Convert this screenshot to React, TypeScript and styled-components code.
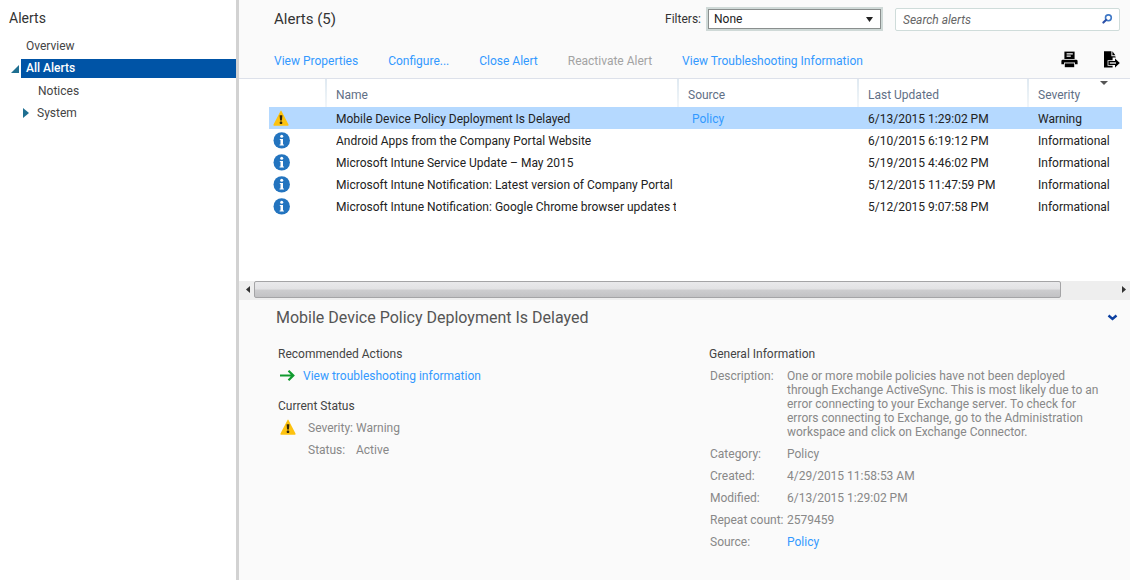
import React from "react";
import styled, { createGlobalStyle } from "styled-components";

const GlobalStyle = createGlobalStyle`
  *, *::before, *::after { box-sizing: border-box; }
  body {
    margin: 0;
    background: #ffffff;
    color: #222222;
    font-family: Roboto, "Open Sans", sans-serif;
    font-size: 12px;
    line-height: 22px;
  }
  button, input, select { font: inherit; color: inherit; }
  h1, h2, h3, p, ul, dl, dd { margin: 0; padding: 0; font-weight: 400; }
`;

const Page = styled.div`
  display: flex;
  min-height: 100vh;
`;

const Sidebar = styled.nav`
  flex: 0 0 239px;
  border-right: 3px solid #d2d2d2;
  padding-top: 6px;
`;

const SidebarTitle = styled.h2`
  font-size: 14px;
  line-height: 24px;
  padding-left: 9px;
  margin-bottom: 5px;
  color: #333333;
`;

const Tree = styled.ul`
  list-style: none;
`;

const TreeRow = styled.li<{ $indent: number }>`
  display: flex;
  align-items: center;
  min-height: 22px;
  padding-left: ${(p) => p.$indent}px;
`;

const Toggle = styled.button`
  display: flex;
  justify-content: center;
  align-items: center;
  flex: 0 0 12px;
  height: 18px;
  padding: 0 1px 0 0;
  border: 0;
  background: none;
`;

const TreeLink = styled.a<{ $selected?: boolean }>`
  flex: 1;
  padding-left: 5px;
  line-height: ${(p) => (p.$selected ? 19 : 22)}px;
  margin: ${(p) => (p.$selected ? "2px 0" : "0")};
  background: ${(p) => (p.$selected ? "#0054a6" : "transparent")};
  color: ${(p) => (p.$selected ? "#ffffff" : "#444444")};
  font-weight: ${(p) => (p.$selected ? 500 : 400)};
  text-decoration: none;
`;

const Main = styled.main`
  flex: 1;
  min-width: 0;
  display: flex;
  flex-direction: column;
`;

const Header = styled.header`
  background: #fafafa;
  border-bottom: 1px solid #dde1ea;
  padding: 7px 10px 6px 35px;
`;

const TitleBar = styled.div`
  display: flex;
  align-items: center;
  height: 24px;
`;

const PageTitle = styled.h1`
  flex: 1;
  font-size: 15px;
  color: #333333;
`;

const FilterLabel = styled.label`
  margin-right: 5px;
  color: #333333;
`;

const SelectFrame = styled.div`
  position: relative;
  width: 177px;
  margin-right: 12px;
  border: 1px solid #cfd9d7;
  background: #cfd9d7;
  padding: 1px;
`;

const FilterSelect = styled.select`
  display: block;
  appearance: none;
  width: 100%;
  height: 20px;
  padding: 0 5px;
  border: 1px solid #8a8f8e;
  border-radius: 0;
  background: #ffffff;
  color: #222222;
  line-height: 18px;
`;

const SelectArrow = styled.svg`
  position: absolute;
  right: 9px;
  top: 9px;
  pointer-events: none;
`;

const SearchBox = styled.form`
  display: flex;
  align-items: center;
  width: 225px;
  height: 23px;
  padding-right: 6px;
  border: 1px solid #cfdcda;
  border-radius: 2px;
  background: #ffffff;
`;

const SearchInput = styled.input`
  flex: 1;
  min-width: 0;
  border: 0;
  padding: 1px 7px 0;
  height: 21px;
  background: none;
  outline: 0;
  &::placeholder { color: #666666; font-style: italic; opacity: 1; }
`;

const IconButton = styled.button`
  display: flex;
  padding: 0;
  border: 0;
  background: none;
`;

const Toolbar = styled.div`
  display: flex;
  align-items: center;
  gap: 30px;
  margin-top: 19px;
`;

const Command = styled.button`
  border: 0;
  padding: 0;
  background: none;
  white-space: nowrap;
  color: #3399ff;
  &:disabled { color: #a3a3a3; }
`;

const ToolbarIcons = styled.div`
  display: flex;
  gap: 25px;
  margin-left: auto;
  padding-bottom: 4px;
`;

const ListArea = styled.section`
  min-height: 202px;
  padding: 0 8px 0 30px;
  background: #ffffff;
`;

const AlertTable = styled.table`
  width: 100%;
  table-layout: fixed;
  border-collapse: collapse;
`;

const HeadCell = styled.th<{ $width?: number; $divided?: boolean }>`
  width: ${(p) => (p.$width ? `${p.$width}px` : "auto")};
  height: 28px;
  padding: 4px 0 0 11px;
  text-align: left;
  font-weight: 400;
  color: #5f6f86;
  background: ${(p) =>
    p.$divided ? "linear-gradient(#dfe9f1, #f2f6f9) left / 2px 100% no-repeat" : "none"};
`;

const SortMark = styled.svg`
  position: absolute;
  right: 14px;
  top: -3px;
`;

const SortLabel = styled.span`
  display: block;
  position: relative;
`;

const Row = styled.tr<{ $selected?: boolean }>`
  height: 22px;
  background: ${(p) => (p.$selected ? "#b5d9ff" : "transparent")};
`;

const Cell = styled.td<{ $inset?: number }>`
  padding: 2px 0 0 ${(p) => p.$inset ?? 11}px;
  line-height: 20px;
  white-space: nowrap;
  overflow: hidden;
`;

const Clip = styled.div`
  overflow: hidden;
  margin-right: 1px;
`;

const Link = styled.a`
  color: #3399ff;
  text-decoration: none;
`;

const ScrollTrack = styled.div`
  display: flex;
  align-items: flex-start;
  height: 19px;
  background: #eeeeee;
`;

const ScrollButton = styled.button<{ $width: number }>`
  flex: 0 0 ${(p) => p.$width}px;
  display: flex;
  align-items: center;
  justify-content: flex-end;
  height: 17px;
  padding: 0 4px 0 0;
  border: 0;
  background: none;
`;

const ScrollRail = styled.div`
  flex: 1;
  padding-right: 54px;
`;

const ScrollThumb = styled.div`
  height: 17px;
  border: 1px solid #a4a4a6;
  border-radius: 2px;
  background: linear-gradient(#e9e9eb 0%, #e2e2e4 48%, #cdcdcf 52%, #c2c2c4 100%);
`;

const Details = styled.section`
  flex: 1;
  background: #fafafa;
  padding: 6px 12px 16px 37px;
`;

const DetailsHead = styled.div`
  display: flex;
  justify-content: space-between;
  align-items: center;
  margin-bottom: 13px;
`;

const DetailsTitle = styled.h2`
  font-size: 16px;
  line-height: 24px;
  color: #555555;
`;

const DetailsColumns = styled.div`
  display: grid;
  grid-template-columns: 433fr 409fr;
`;

const Group = styled.div`
  padding-left: 2px;
  margin-bottom: 8px;
`;

const GroupTitle = styled.h3`
  font-size: 12px;
  color: #444444;
`;

const ActionLine = styled.div`
  display: flex;
  align-items: center;
  gap: 8px;
  padding-left: 2px;
`;

const StatusLine = styled.div`
  display: grid;
  grid-template-columns: 28px 48px 1fr;
  align-items: center;
  padding-left: 2px;
  color: #888888;
`;

const Facts = styled.dl`
  display: grid;
  grid-template-columns: 77px 1fr;
  padding-left: 1px;
  color: #888888;
`;

const FactName = styled.dt`
  white-space: nowrap;
`;

const FactValue = styled.dd<{ $long?: boolean }>`
  line-height: ${(p) => (p.$long ? 14 : 22)}px;
  padding: ${(p) => (p.$long ? "4px 16px 4px 0" : "0")};
`;

const WarningIcon = () => (
  <svg width="18" height="18" viewBox="0 0 18 18" role="img" aria-label="Warning">
    <path d="M7.4 1.2Q8 0 8.6 1.2L15.5 14.6Q15.9 15.8 14.8 15.8H1.2Q0.1 15.8 0.5 14.6Z" fill="#fdc20f" />
    <path d="M6.6 5.2H9.4L8.9 10.6H7.1Z" fill="#33270a" />
    <rect x="6.8" y="11.6" width="2.4" height="2.4" rx="0.6" fill="#33270a" />
  </svg>
);

const InfoIcon = () => (
  <svg width="18" height="18" viewBox="0 0 18 18" role="img" aria-label="Informational">
    <circle cx="8.7" cy="8.4" r="8.2" fill="#2374bf" />
    <circle cx="8.7" cy="4.2" r="1.5" fill="#ffffff" />
    <path d="M6.8 6.9H10V12.4H10.9V13.6H6.6V12.4H7.5V8.1H6.8Z" fill="#ffffff" />
  </svg>
);

const IconCell = styled(Cell)`
  svg { display: block; }
`;

const alerts = [
  { name: "Mobile Device Policy Deployment Is Delayed", source: "Policy", updated: "6/13/2015 1:29:02 PM", severity: "Warning" },
  { name: "Android Apps from the Company Portal Website", source: "", updated: "6/10/2015 6:19:12 PM", severity: "Informational" },
  { name: "Microsoft Intune Service Update – May 2015", source: "", updated: "5/19/2015 4:46:02 PM", severity: "Informational" },
  { name: "Microsoft Intune Notification: Latest version of Company Portal a", source: "", updated: "5/12/2015 11:47:59 PM", severity: "Informational" },
  { name: "Microsoft Intune Notification: Google Chrome browser updates t", source: "", updated: "5/12/2015 9:07:58 PM", severity: "Informational" },
];

export default function App() {
  return (
    <>
      <GlobalStyle />
      <Page>
        <Sidebar aria-label="Alerts">
          <SidebarTitle>Alerts</SidebarTitle>
          <Tree>
            <TreeRow $indent={21}>
              <TreeLink href="#overview">Overview</TreeLink>
            </TreeRow>
            <TreeRow $indent={9}>
              <Toggle aria-label="Collapse All Alerts">
                <svg width="8" height="8" viewBox="0 0 8 8"><path d="M8 0V8H0Z" fill="#1f6f91" /></svg>
              </Toggle>
              <TreeLink href="#all" $selected>All Alerts</TreeLink>
            </TreeRow>
            <TreeRow $indent={33}>
              <TreeLink href="#notices">Notices</TreeLink>
            </TreeRow>
            <TreeRow $indent={20}>
              <Toggle aria-label="Expand System">
                <svg width="6" height="10" viewBox="0 0 6 10"><path d="M0 0L6 5L0 10Z" fill="#1f6f91" /></svg>
              </Toggle>
              <TreeLink href="#system">System</TreeLink>
            </TreeRow>
          </Tree>
        </Sidebar>

        <Main>
          <Header>
            <TitleBar>
              <PageTitle>Alerts (5)</PageTitle>
              <FilterLabel htmlFor="filters">Filters:</FilterLabel>
              <SelectFrame>
                <FilterSelect id="filters" defaultValue="None">
                  <option>None</option>
                </FilterSelect>
                <SelectArrow width="7" height="5" viewBox="0 0 7 5"><path d="M0 0H7L3.5 5Z" fill="#222222" /></SelectArrow>
              </SelectFrame>
              <SearchBox role="search">
                <SearchInput type="text" aria-label="Search alerts" placeholder="Search alerts" />
                <IconButton type="button" aria-label="Search">
                  <svg width="11" height="11" viewBox="0 0 11 11" fill="none">
                    <circle cx="6.4" cy="3.8" r="2.9" stroke="#3f78c6" strokeWidth="1.6" />
                    <path d="M4 6L1.4 8.6" stroke="#2c50a8" strokeWidth="2.1" strokeLinecap="round" />
                  </svg>
                </IconButton>
              </SearchBox>
            </TitleBar>
            <Toolbar>
              <Command>View Properties</Command>
              <Command>Configure...</Command>
              <Command>Close Alert</Command>
              <Command disabled>Reactivate Alert</Command>
              <Command>View Troubleshooting Information</Command>
              <ToolbarIcons>
                <IconButton aria-label="Print">
                  <svg width="17" height="17" viewBox="0 0 17 17">
                    <path d="M3.4 0.6H13.6V8H3.4Z" fill="#000000" />
                    <path d="M5.6 2.9H11.8M5.6 5.1H9.8" stroke="#fafafa" strokeWidth="1.1" />
                    <path d="M1.8 8.8H15.2Q16.6 8.8 16.6 10.2V13.2H14V11.4H3V13.2H0.4V10.2Q0.4 8.8 1.8 8.8Z" fill="#000000" />
                    <path d="M3.8 12.4H13.2V16.2H3.8Z" fill="#000000" />
                  </svg>
                </IconButton>
                <IconButton aria-label="Export">
                  <svg width="17" height="17" viewBox="0 0 17 17">
                    <path d="M1 0.2H8.4V5.2H12.4V16.4H1Z" fill="#000000" />
                    <path d="M9.4 0.2L12.4 4.2H9.4Z" fill="#000000" />
                    <path d="M4.6 9.2H9.6V6.4H12L17 11.8V12.4L12 17H9.6V14.8H4.6Z" fill="#fafafa" />
                    <path d="M5.4 10H12V7.6L16.8 12L12 16.4V14H5.4Z" fill="#000000" />
                    <path d="M6.8 12H13" stroke="#fafafa" strokeWidth="1.3" />
                  </svg>
                </IconButton>
              </ToolbarIcons>
            </Toolbar>
          </Header>

          <ListArea>
            <AlertTable>
              <thead>
                <tr>
                  <HeadCell $width={56} aria-label="Status" />
                  <HeadCell $divided>Name</HeadCell>
                  <HeadCell $width={180} $divided>Source</HeadCell>
                  <HeadCell $width={170} $divided>Last Updated</HeadCell>
                  <HeadCell $width={95} $divided aria-sort="descending">
                    <SortLabel>
                      Severity
                      <SortMark width="8" height="4" viewBox="0 0 8 4"><path d="M0 0H8L4 4Z" fill="#555555" /></SortMark>
                    </SortLabel>
                  </HeadCell>
                </tr>
              </thead>
              <tbody>
                {alerts.map((a, i) => (
                  <Row key={a.name} $selected={i === 0}>
                    <IconCell $inset={4}>{a.severity === "Warning" ? <WarningIcon /> : <InfoIcon />}</IconCell>
                    <Cell><Clip>{a.name}</Clip></Cell>
                    <Cell $inset={15}>{a.source && <Link href="#policy">{a.source}</Link>}</Cell>
                    <Cell>{a.updated}</Cell>
                    <Cell>{a.severity}</Cell>
                  </Row>
                ))}
              </tbody>
            </AlertTable>
          </ListArea>

          <ScrollTrack>
            <ScrollButton $width={15} aria-label="Scroll left">
              <svg width="4" height="7" viewBox="0 0 4 7"><path d="M4 0V7L0 3.5Z" fill="#333333" /></svg>
            </ScrollButton>
            <ScrollRail><ScrollThumb /></ScrollRail>
            <ScrollButton $width={15} aria-label="Scroll right">
              <svg width="4" height="7" viewBox="0 0 4 7"><path d="M0 0V7L4 3.5Z" fill="#333333" /></svg>
            </ScrollButton>
          </ScrollTrack>

          <Details>
            <DetailsHead>
              <DetailsTitle>Mobile Device Policy Deployment Is Delayed</DetailsTitle>
              <IconButton aria-label="Collapse details">
                <svg width="11" height="8" viewBox="0 0 11 8" fill="none">
                  <path d="M1.5 1.5L5.5 5L9.5 1.5" stroke="#0b3fa0" strokeWidth="2.4" />
                </svg>
              </IconButton>
            </DetailsHead>
            <DetailsColumns>
              <div>
                <Group>
                  <GroupTitle>Recommended Actions</GroupTitle>
                  <ActionLine>
                    <svg width="15" height="12" viewBox="0 0 15 12" fill="none">
                      <path d="M0 5.5H13M8.5 0.8L13.3 5.5L8.5 10.2" stroke="#0f9a2e" strokeWidth="2.2" />
                    </svg>
                    <Link href="#troubleshoot">View troubleshooting information</Link>
                  </ActionLine>
                </Group>
                <Group>
                  <GroupTitle>Current Status</GroupTitle>
                  <StatusLine><WarningIcon /><span>Severity:</span><span>Warning</span></StatusLine>
                  <StatusLine><span /><span>Status:</span><span>Active</span></StatusLine>
                </Group>
              </div>
              <div>
                <GroupTitle>General Information</GroupTitle>
                <Facts>
                  <FactName>Description:</FactName>
                  <FactValue $long>
                    One or more mobile policies have not been deployed through Exchange ActiveSync. This is most
                    likely due to an error connecting to your Exchange server. To check for errors connecting to
                    Exchange, go to the Administration workspace and click on Exchange Connector.
                  </FactValue>
                  <FactName>Category:</FactName>
                  <FactValue>Policy</FactValue>
                  <FactName>Created:</FactName>
                  <FactValue>4/29/2015 11:58:53 AM</FactValue>
                  <FactName>Modified:</FactName>
                  <FactValue>6/13/2015 1:29:02 PM</FactValue>
                  <FactName>Repeat count:</FactName>
                  <FactValue>2579459</FactValue>
                  <FactName>Source:</FactName>
                  <FactValue><Link href="#policy">Policy</Link></FactValue>
                </Facts>
              </div>
            </DetailsColumns>
          </Details>
        </Main>
      </Page>
    </>
  );
}
